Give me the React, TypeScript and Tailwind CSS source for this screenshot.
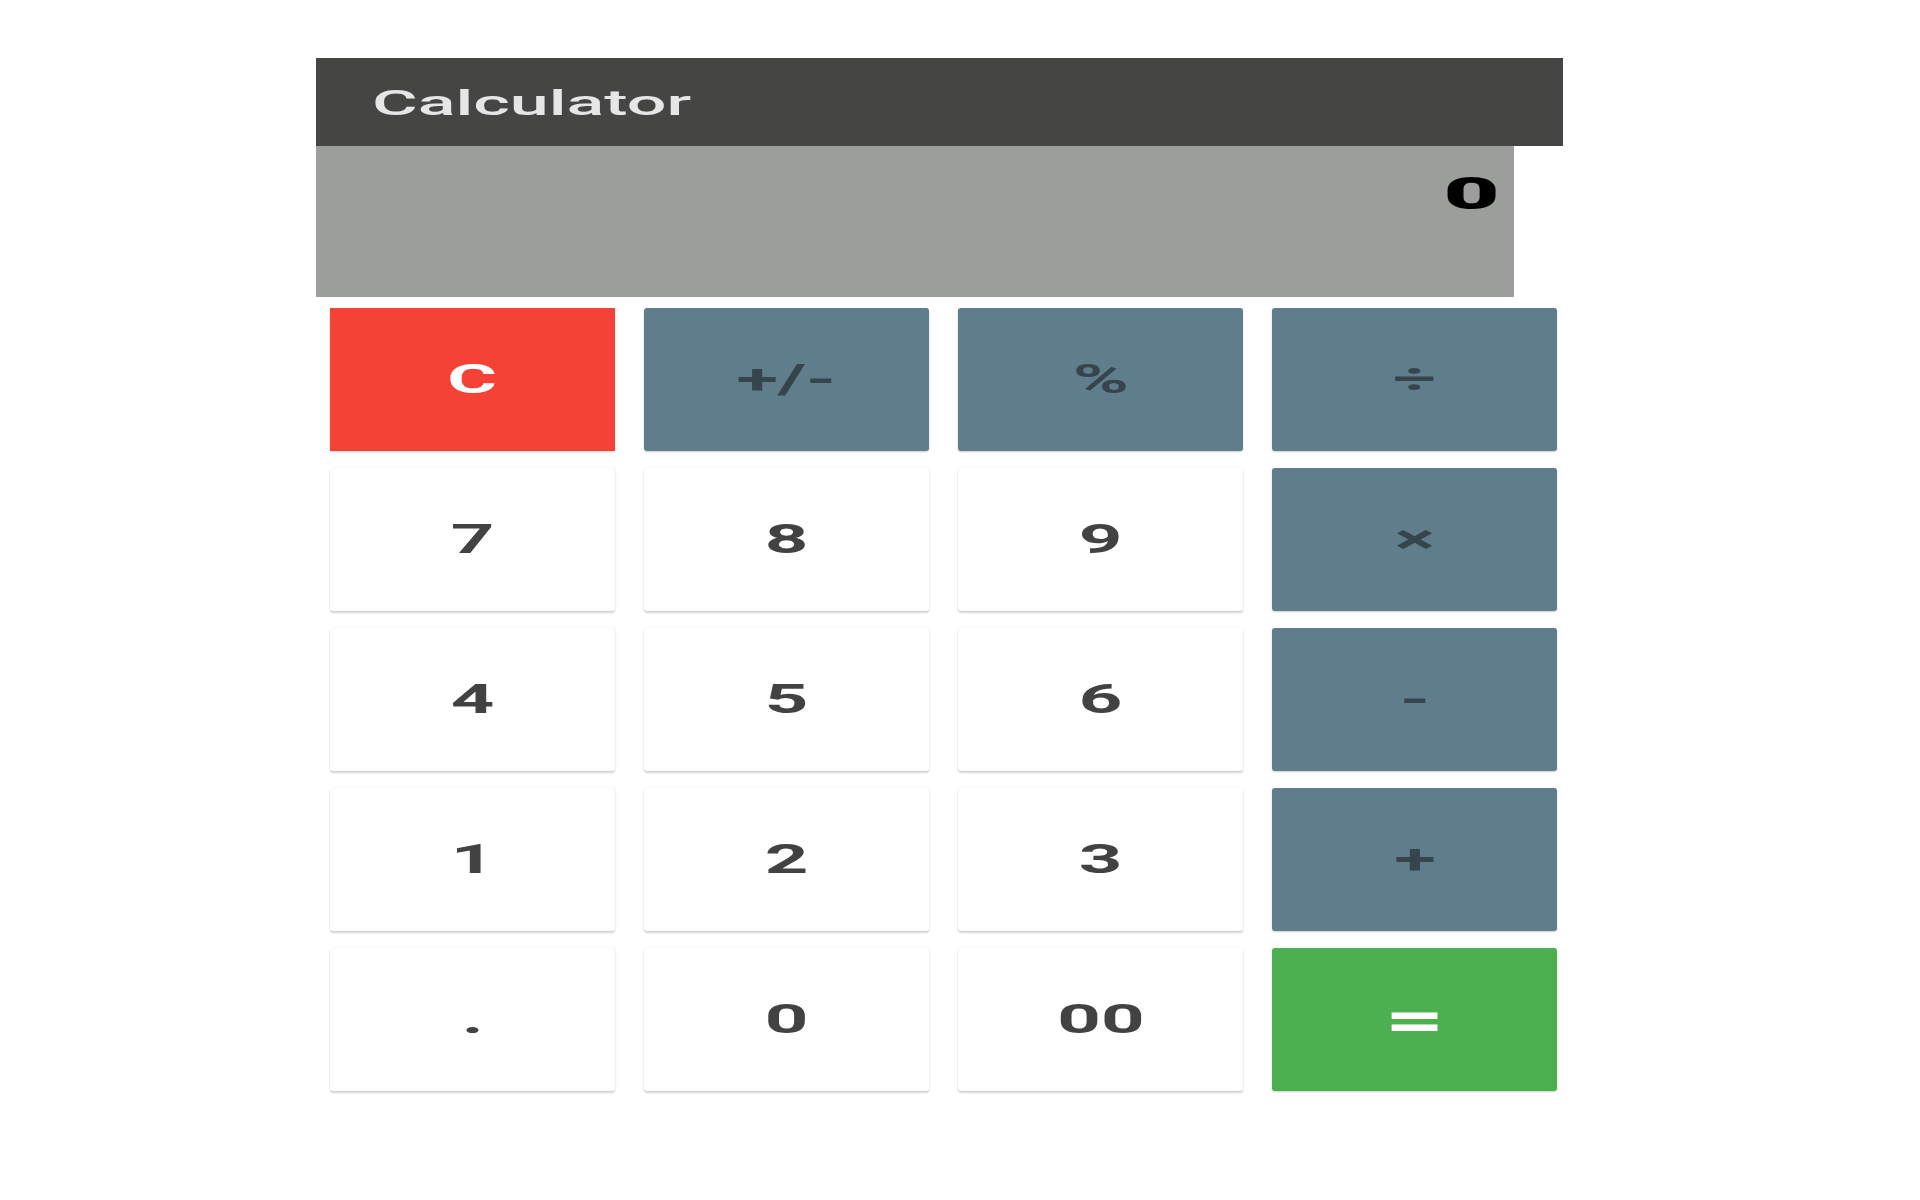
import React from "react";

type Key = {
  label: string;
  kind: "clear" | "op" | "num" | "equals";
};

const keys: Key[] = [
  { label: "C", kind: "clear" },
  { label: "+/-", kind: "op" },
  { label: "%", kind: "op" },
  { label: "÷", kind: "op" },
  { label: "7", kind: "num" },
  { label: "8", kind: "num" },
  { label: "9", kind: "num" },
  { label: "×", kind: "op" },
  { label: "4", kind: "num" },
  { label: "5", kind: "num" },
  { label: "6", kind: "num" },
  { label: "-", kind: "op" },
  { label: "1", kind: "num" },
  { label: "2", kind: "num" },
  { label: "3", kind: "num" },
  { label: "+", kind: "op" },
  { label: ".", kind: "num" },
  { label: "0", kind: "num" },
  { label: "00", kind: "num" },
  { label: "=", kind: "equals" },
];

const keyStyles: Record<Key["kind"], string> = {
  clear: "bg-[#f44336] text-white shadow-[0_1px_2px_rgba(0,0,0,0.2)]",
  op: "bg-[#607d8b] text-[#36454d] shadow-[0_1px_2px_rgba(0,0,0,0.2)] rounded-[3px]",
  num: "bg-white text-[#424242] shadow-[0_2px_2px_rgba(0,0,0,0.16),0_0_2px_rgba(0,0,0,0.1)] rounded-[3px]",
  equals: "bg-[#4caf50] text-white shadow-[0_1px_2px_rgba(0,0,0,0.2)] rounded-[3px]",
};

function CalcKey({ k }: { k: Key }) {
  return (
    <button
      type="button"
      className={`h-[143px] flex items-center justify-center ${keyStyles[k.kind]}`}
    >
      <span
        className={`inline-block font-bold leading-none ${
          k.kind === "equals"
            ? "text-[58px] scale-x-[1.8]"
            : "text-[40px] scale-x-[1.9]"
        }`}
      >
        {k.label}
      </span>
    </button>
  );
}

export default function App() {
  return (
    <main className="min-h-screen bg-white font-['Roboto','Liberation_Sans',sans-serif]">
      <div className="ml-[316px] pt-[58px] w-[1247px]">
        {/* title bar */}
        <div className="h-[88px] bg-[#454644] flex items-center pl-[56px] pt-[3px]">
          <span className="inline-block origin-left scale-x-200 text-[35px] font-medium text-[#e6e6e6] leading-none">
            Calculator
          </span>
        </div>

        {/* display */}
        <div className="w-[1198px] h-[151px] bg-[#9c9e9b] flex justify-end pt-[26px] pr-[14px]">
          <span className="inline-block origin-right scale-x-[2.2] text-[44px] font-black text-black leading-none h-fit">
            0
          </span>
        </div>

        {/* keypad */}
        <div className="grid grid-cols-[repeat(4,285px)] gap-x-[29px] gap-y-[17px] pl-[14px] mt-[11px]">
          {keys.map((k) => (
            <CalcKey key={k.label} k={k} />
          ))}
        </div>
      </div>
    </main>
  );
}
